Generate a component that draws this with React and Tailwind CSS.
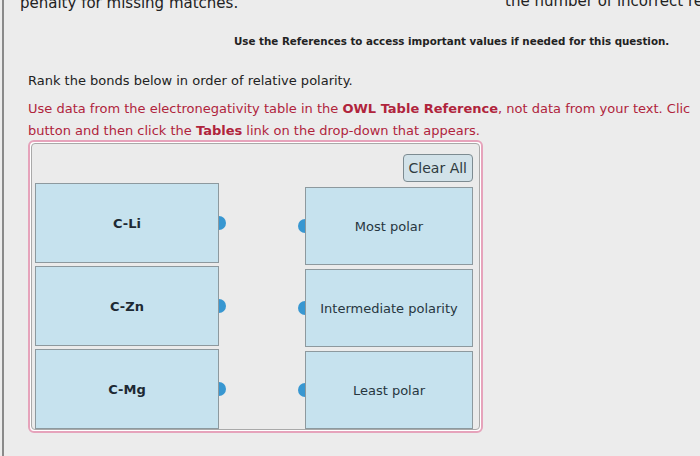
import { useState } from 'react'

const bonds = ['C-Li', 'C-Zn', 'C-Mg']
const ranks = ['Most polar', 'Intermediate polarity', 'Least polar']

const font = { fontFamily: '"DejaVu Sans", Verdana, sans-serif' }

function LeftCard({ label }) {
  return (
    <div className="relative h-[80px] bg-[#c6e2ee] border border-[#8d999e] flex items-center justify-center">
      <span className="text-[13px] font-bold text-[#1d2933]">{label}</span>
      <span className="absolute right-[-8px] top-1/2 -translate-y-1/2 w-[7px] h-[14px] rounded-r-full bg-[#3897d1]" />
    </div>
  )
}

function RightCard({ label }) {
  return (
    <div className="relative h-[78px] bg-[#c6e2ee] border border-[#8d999e] flex items-center justify-center">
      <span className="text-[13px] text-[#27363f]">{label}</span>
      <span className="absolute left-[-8px] top-1/2 -translate-y-1/2 w-[7px] h-[14px] rounded-l-full bg-[#3897d1]" />
    </div>
  )
}

export default function App() {
  const [cleared, setCleared] = useState(false)

  return (
    <div className="w-[700px] h-[456px] overflow-hidden bg-[#ececec]" style={font}>
      <div className="ml-[2px] h-full border-l-2 border-[#8a8a8a] text-[#222]">
        {/* Header line, cut off at the top of the screen */}
        <div className="flex h-[12px]">
          <p className="ml-[16px] mt-[-7px] text-[15px] leading-[20px] whitespace-nowrap">penalty for missing matches.</p>
          <p className="ml-auto w-[195px] overflow-hidden mt-[-9px] text-[15px] leading-[20px] whitespace-nowrap">the number of incorrect responses</p>
        </div>

        <p className="mt-[22px] ml-[230px] text-[10.3px] font-bold whitespace-nowrap">
          Use the References to access important values if needed for this question.
        </p>

        <div className="ml-[24px] mt-[21px] text-[13px] leading-[22px]">
          <p>Rank the bonds below in order of relative polarity.</p>
          <p className="mt-[6px] text-[#b0243c] whitespace-nowrap">
            Use data from the electronegativity table in the <b>OWL Table Reference</b>, not data from your text. Clic
          </p>
          <p className="text-[#b0243c] whitespace-nowrap">
            button and then click the <b>Tables</b> link on the drop-down that appears.
          </p>
        </div>

        {/* Matching panel */}
        <div className="ml-[24px] mt-[-2px] w-[455px] h-[293px] border-2 border-[#e6a3bb] rounded-[6px] p-px bg-white">
          <div className="h-full rounded-[4px] border border-[#a9a9a9] bg-[#ebebeb] px-[3px] pt-[10px]">
            <div className="flex justify-end mr-[3px]">
              <button
                onClick={() => setCleared(!cleared)}
                className="h-[28px] px-[5px] rounded-[4px] border border-[#7d8b91] bg-[#d2e2e9] text-[14px] text-[#2f3a40]"
              >
                Clear All
              </button>
            </div>
            <div className="flex mt-px">
              <div className="w-[184px] flex flex-col gap-[3px]">
                {bonds.map(b => <LeftCard key={b} label={b} />)}
              </div>
              <div className="w-[168px] ml-auto mr-[3px] mt-[4px] flex flex-col gap-[4px]">
                {ranks.map(r => <RightCard key={r} label={r} />)}
              </div>
            </div>
          </div>
        </div>
      </div>
    </div>
  )
}
